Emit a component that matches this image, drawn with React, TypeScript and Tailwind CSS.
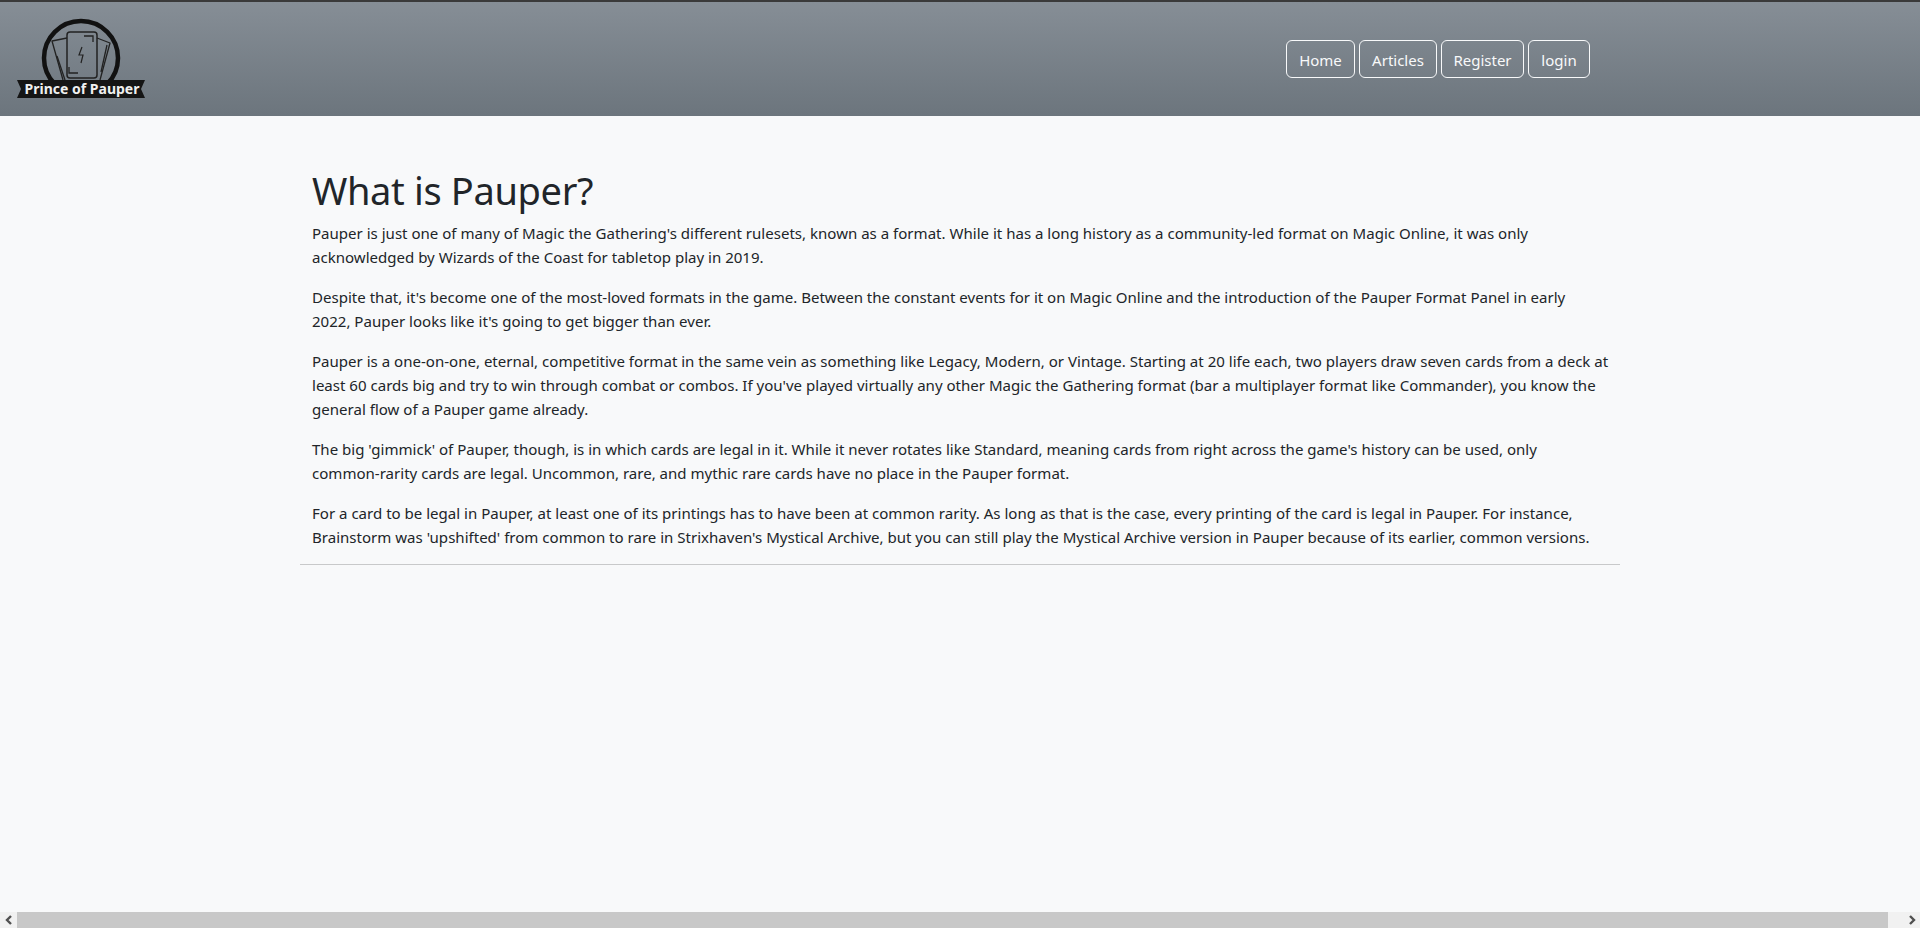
import React from "react";

const navItems = [
  { label: "Home", width: "w-[69px]" },
  { label: "Articles", width: "w-[78px]" },
  { label: "Register", width: "w-[83px]" },
  { label: "login", width: "w-[62px]" },
];

const paragraphs = [
  [
    "Pauper is just one of many of Magic the Gathering's different rulesets, known as a format. While it has a long history as a community-led format on Magic Online, it was only",
    "acknowledged by Wizards of the Coast for tabletop play in 2019.",
  ],
  [
    "Despite that, it's become one of the most-loved formats in the game. Between the constant events for it on Magic Online and the introduction of the Pauper Format Panel in early",
    "2022, Pauper looks like it's going to get bigger than ever.",
  ],
  [
    "Pauper is a one-on-one, eternal, competitive format in the same vein as something like Legacy, Modern, or Vintage. Starting at 20 life each, two players draw seven cards from a deck at",
    "least 60 cards big and try to win through combat or combos. If you've played virtually any other Magic the Gathering format (bar a multiplayer format like Commander), you know the",
    "general flow of a Pauper game already.",
  ],
  [
    "The big 'gimmick' of Pauper, though, is in which cards are legal in it. While it never rotates like Standard, meaning cards from right across the game's history can be used, only",
    "common-rarity cards are legal. Uncommon, rare, and mythic rare cards have no place in the Pauper format.",
  ],
  [
    "For a card to be legal in Pauper, at least one of its printings has to have been at common rarity. As long as that is the case, every printing of the card is legal in Pauper. For instance,",
    "Brainstorm was 'upshifted' from common to rare in Strixhaven's Mystical Archive, but you can still play the Mystical Archive version in Pauper because of its earlier, common versions.",
  ],
];

const Logo = () => (
  <div className="relative w-[130px] h-[84px]">
    <svg width="130" height="84" viewBox="0 0 130 84" fill="none" className="block">
      <circle cx="64" cy="41" r="37" stroke="#111" strokeWidth="4.5" />
      <path d="M50 21 L35 24 L46 63" stroke="#222" strokeWidth="1.3" strokeLinejoin="round" />
      <path d="M40 39 L48 63" stroke="#222" strokeWidth="1.3" />
      <path d="M80 21 L93 26 L83 63" stroke="#222" strokeWidth="1.3" strokeLinejoin="round" />
      <path d="M90 28 L84 55" stroke="#222" strokeWidth="1.3" />
      <rect x="50" y="15" width="30" height="46" rx="3" stroke="#222" strokeWidth="1.5" />
      <path d="M67 19 H76 V25 M52 50 V56 H61" stroke="#222" strokeWidth="1.3" />
      <path d="M65 30 L62 38 H66 L64 46" stroke="#222" strokeWidth="1.2" />
      <path d="M0 63 H128 L124 72 L128 81 H0 L4 72 Z" fill="#151515" />
    </svg>
    <span className="absolute left-[1px] top-[62px] w-[128px] h-[18px] flex items-center justify-center text-[14px] font-bold text-[#f0f0f0] font-['Noto_Sans',sans-serif] whitespace-nowrap">
      Prince of Pauper
    </span>
  </div>
);

export default function App() {
  return (
    <div className="h-[928px] overflow-hidden flex flex-col bg-[#f8f9fa] text-[#212529] font-['Noto_Sans',sans-serif]">
      <header className="h-[116px] shrink-0 flex items-start border-t-2 border-[#3a3a3a] bg-gradient-to-b from-[#868e96] to-[#6c757d]">
        <div className="ml-[17px] mt-[15px]">
          <Logo />
        </div>
        <nav className="ml-[1139px] mt-[38px] flex gap-1">
          {navItems.map((item) => (
            <button
              key={item.label}
              className={`${item.width} h-[38px] pt-[2px] border border-[#f8f9fa] rounded-md text-[#f8f9fa] text-[15px]`}
            >
              {item.label}
            </button>
          ))}
        </nav>
      </header>

      <main className="flex-1">
        <div className="w-[1320px] ml-[300px] border-b border-[#c8c9ca] pt-[50px] pb-[15px]">
          <div className="px-3">
            <h1 className="text-[38px] leading-[48px] tracking-[-0.35px] mb-[7px] font-normal">What is Pauper?</h1>
            {paragraphs.map((lines, i) => (
              <p key={i} className="mb-4 last:mb-0 text-[15.05px] leading-6 whitespace-nowrap">
                {lines.map((line, j) => (
                  <span key={j} className="block">
                    {line}
                  </span>
                ))}
              </p>
            ))}
          </div>
        </div>
      </main>

      <div className="h-[16px] shrink-0 flex bg-[#f1f1f1]">
        <div className="w-[17px] flex items-center justify-center">
          <svg width="8" height="10" viewBox="0 0 8 10"><path d="M6 1 L2 5 L6 9" fill="none" stroke="#505050" strokeWidth="2.4" /></svg>
        </div>
        <div className="flex-1 bg-[#c8c8c8]" />
        <div className="w-[32px] flex items-center justify-end pr-[4px]">
          <svg width="8" height="10" viewBox="0 0 8 10"><path d="M2 1 L6 5 L2 9" fill="none" stroke="#505050" strokeWidth="2.4" /></svg>
        </div>
      </div>
    </div>
  );
}
